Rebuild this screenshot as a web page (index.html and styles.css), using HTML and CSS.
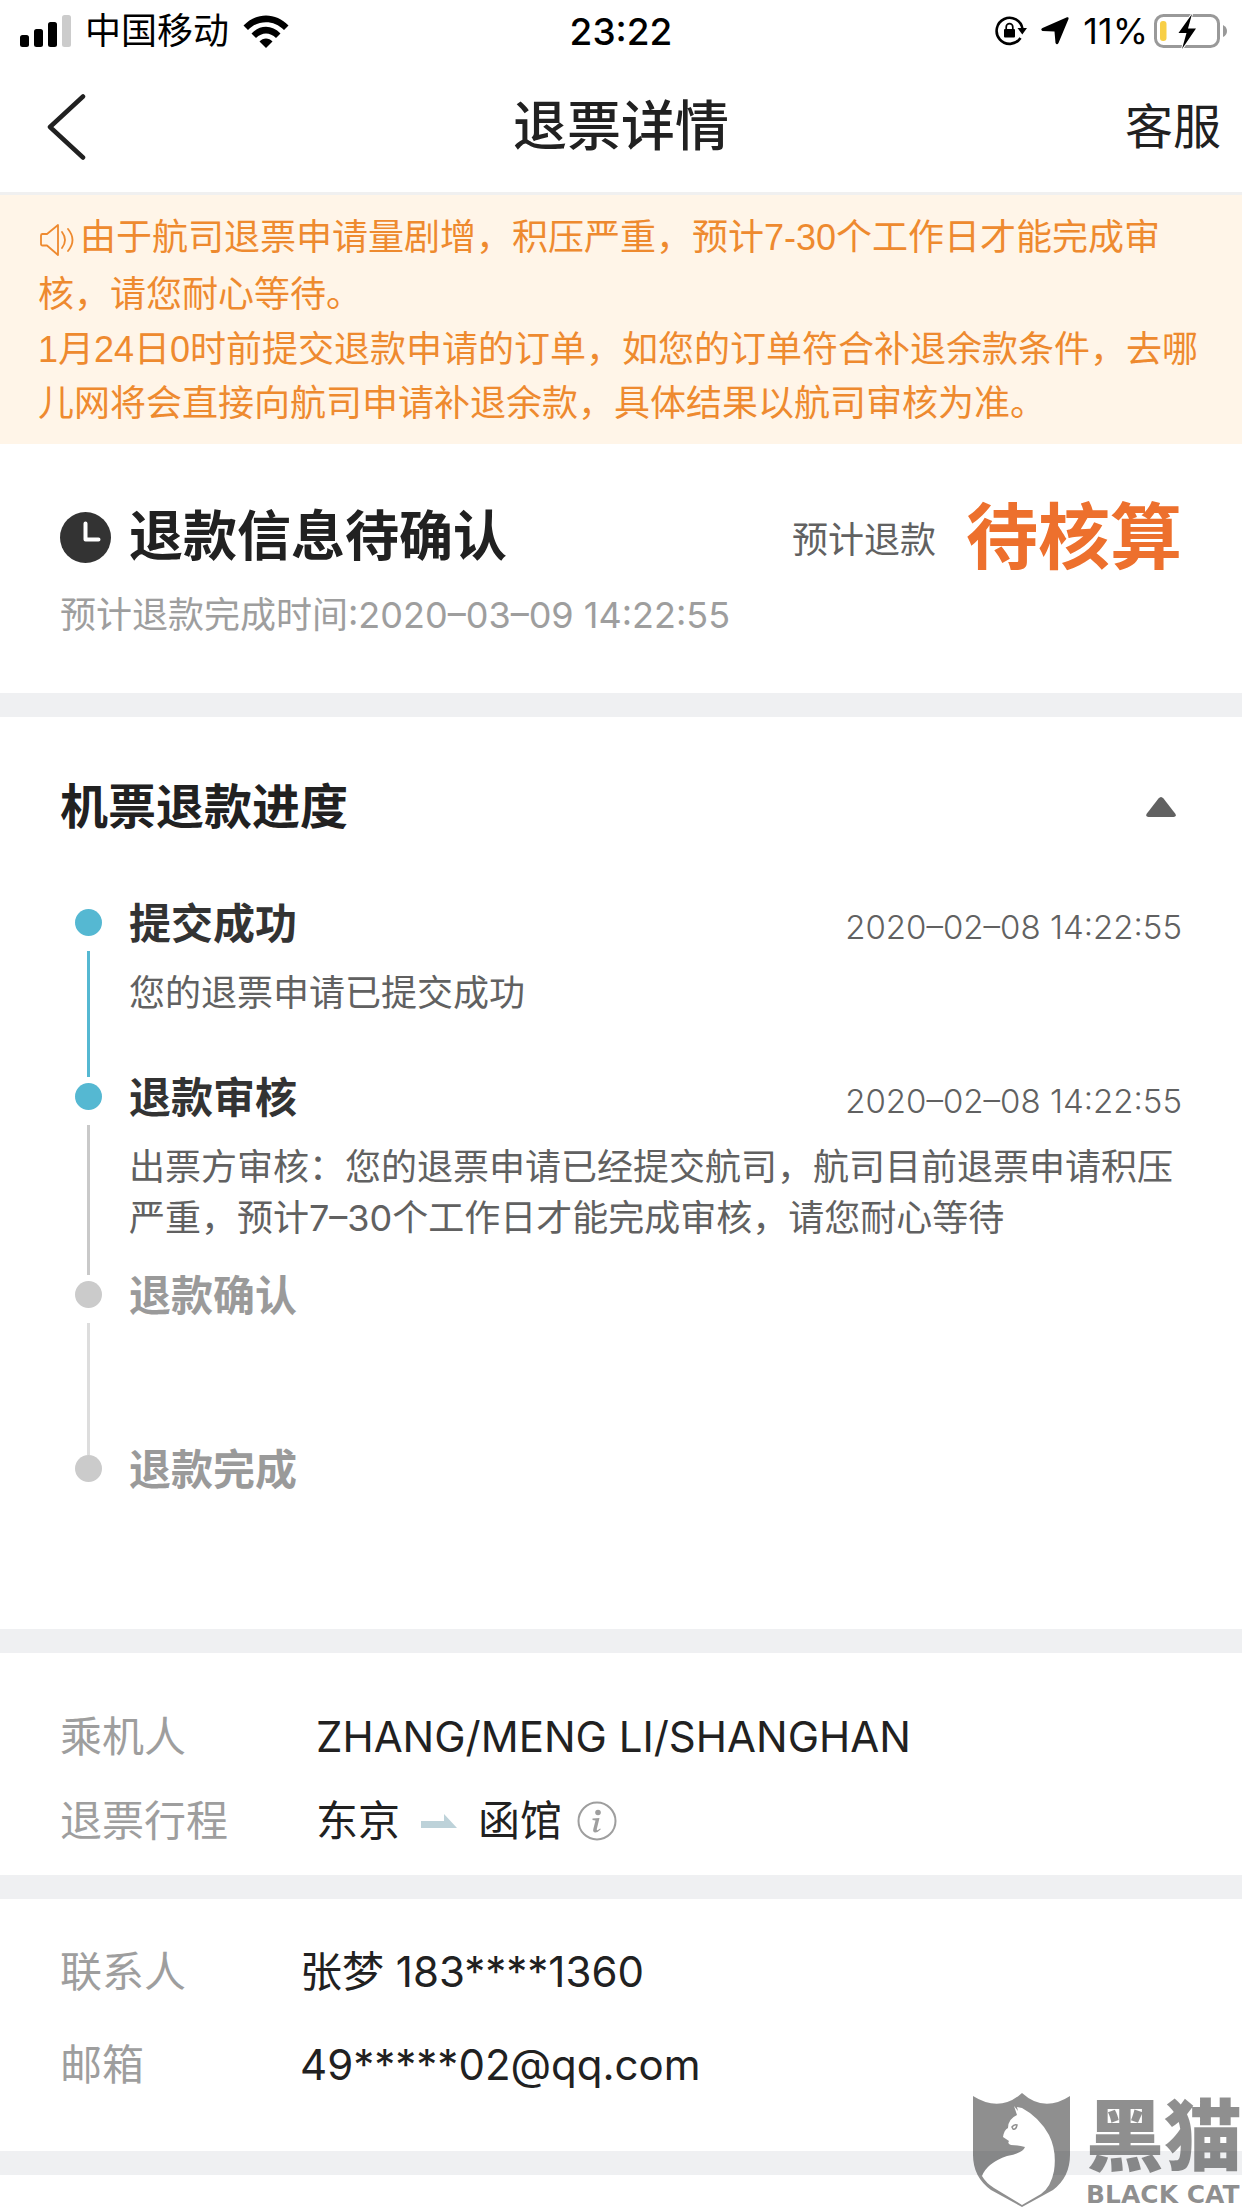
FILE: index.html
```html
<!DOCTYPE html>
<html lang="zh-CN">
<head>
<meta charset="utf-8">
<meta name="viewport" content="width=device-width">
<title>退票详情</title>
<link rel="stylesheet" href="styles.css">
</head>
<body>
<div class="status">
  <div class="status-left">
    <svg class="signal" width="51" height="32" viewBox="0 0 51 32" aria-hidden="true">
      <rect x="0" y="20" width="9" height="12" rx="2.5"/><rect x="14" y="14" width="9" height="18" rx="2.5"/><rect x="28" y="7" width="9" height="25" rx="2.5"/><rect x="42" y="0" width="9" height="32" rx="2.5" fill="#ccc"/>
    </svg>
    <span class="carrier">中国移动</span>
    <svg width="46" height="33" viewBox="0 0 46 33" aria-hidden="true">
      <path d="M0.5 10.5C13-3 33-3 45.500 10.500L41 15C31 4.500 15 4.500 5 15Z"/><path d="M8.500 18.500C17 9.500 29 9.500 37.500 18.500L33 23C27 17 19 17 13 23Z"/><path d="M16.500 26.500C20 22.500 26 22.500 29.500 26.500L23 33Z"/>
    </svg>
  </div>
  <time class="clock">23:22</time>
  <div class="status-right">
    <svg width="32" height="30" viewBox="0 0 32 30" aria-hidden="true">
      <path d="M25.500 22A13 13 0 1 1 27.500 13" fill="none" stroke="#000" stroke-width="2.600"/><path d="M22.500 12h9.500l-4.700 6.500z"/>
      <rect x="9" y="13" width="11" height="8.500" rx="1"/><path d="M11.200 14v-3a3.300 3.300 0 0 1 6.600 0v3" fill="none" stroke="#000" stroke-width="1.700"/>
    </svg>
    <svg class="location" width="28" height="28" viewBox="0 0 28 28" aria-hidden="true"><path d="M26 .3Q28-.3 27.500 2L17.500 26Q16 28.500 14.500 26L13.500 14.500 1.500 14Q-1 12.500 1.500 11Z"/></svg>
    <span class="percent">11%</span>
    <svg width="74" height="36" viewBox="0 0 74 36" aria-hidden="true">
      <rect x="1.500" y="2.500" width="63" height="31" rx="8" fill="none" stroke="#999" stroke-width="3"/><path d="M69 12q4 2 4 6t-4 6z" fill="#999"/>
      <rect x="6" y="8" width="6.500" height="20" rx="3" fill="#f8cf46"/>
      <path d="M38 1 24.500 20h8L28 36 42 15.500h-8Z" stroke="#fff" stroke-width="2" paint-order="stroke"/>
    </svg>
  </div>
</div>
<header class="nav">
  <button class="back" aria-label="返回"><svg width="39" height="66" viewBox="0 0 39 66"><path d="M36 2.500 3 33 36 63.500" fill="none" stroke="#212121" stroke-width="4.500" stroke-linecap="round" stroke-linejoin="round"/></svg></button>
  <h1>退票详情</h1>
  <a class="service" href="#service">客服</a>
</header>
<section class="notice">
  <p class="delay"><svg class="speaker" width="36" height="32" viewBox="0 0 36 32" fill="none" stroke="#ee8a2f" stroke-width="1.800" stroke-linejoin="round" stroke-linecap="round" aria-hidden="true"><path d="M1 11.500q0-1.500 1.500-1.500H7L18 1v30L7 21.500H2.500Q1 21.500 1 20zM22 8q6 8 0 16M28 5q9 11 0 22"/></svg>由于航司退票申请量剧增，积压严重，预计7-30个工作日才能完成审核，请您耐心等待。</p>
  <p>1月24日0时前提交退款申请的订单，如您的订单符合补退余款条件，去哪儿网将会直接向航司申请补退余款，具体结果以航司审核为准。</p>
</section>
<main>
  <section class="summary">
    <div class="summary-row">
      <svg width="51" height="51" viewBox="0 0 51 51" aria-hidden="true"><circle cx="25.500" cy="25.500" r="25.500" fill="#333"/><path d="M25.500 11.500v16h13" fill="none" stroke="#fff" stroke-width="4" stroke-linecap="round" stroke-linejoin="round"/></svg>
      <h2 class="state">退款信息待确认</h2>
      <span class="estimate">预计退款</span>
      <strong class="amount">待核算</strong>
    </div>
    <p class="eta">预计退款完成时间:2020–03–09 14:22:55</p>
  </section>
  <section class="progress">
    <div class="progress-head">
      <h2>机票退款进度</h2>
      <button class="fold" aria-label="收起"><svg width="30" height="20" viewBox="0 0 30 20"><path d="M12.500 1.500q2.500-3 5 0L29.500 17q1 3-2 3h-25q-3 0-2-3z" fill="#616161"/></svg></button>
    </div>
    <ol class="steps">
      <li class="step done">
        <div class="rail"><i class="dot"></i><i class="line"></i></div>
        <div class="body"><div class="step-head"><h3>提交成功</h3><time>2020–02–08 14:22:55</time></div><p>您的退票申请已提交成功</p></div>
      </li>
      <li class="step current">
        <div class="rail"><i class="dot"></i><i class="line"></i></div>
        <div class="body"><div class="step-head"><h3>退款审核</h3><time>2020–02–08 14:22:55</time></div><p>出票方审核：您的退票申请已经提交航司，航司目前退票申请积压严重，预计7–30个工作日才能完成审核，请您耐心等待</p></div>
      </li>
      <li class="step todo">
        <div class="rail"><i class="dot"></i><i class="line"></i></div>
        <div class="body"><div class="step-head"><h3>退款确认</h3></div></div>
      </li>
      <li class="step todo">
        <div class="rail"><i class="dot"></i></div>
        <div class="body"><div class="step-head"><h3>退款完成</h3></div></div>
      </li>
    </ol>
  </section>
  <dl class="info trip">
    <dt>乘机人</dt><dd>ZHANG/MENG LI/SHANGHAN</dd>
    <dt>退票行程</dt>
    <dd class="route"><span>东京</span>
      <svg class="arrow" width="36" height="14" viewBox="0 0 36 14" aria-hidden="true"><path d="M0 7h23V0l13 14H0z" fill="#bdd2d9"/></svg>
      <span>函馆</span>
      <button class="tip" aria-label="行程说明"><svg width="40" height="40" viewBox="0 0 40 40"><circle cx="20" cy="20" r="18.500" fill="none" stroke="#9e9e9e" stroke-width="2"/><circle cx="21" cy="11.500" r="2.800" fill="#9e9e9e"/><path d="M15.500 17.500 22.500 17 19.800 28q-.3 1.800 1.200 1l2.200-1.600.6.900q-3 3.200-5.500 3.200-2.800-.2-2-3.500l2.200-8.500-3-.6z" fill="#9e9e9e"/></svg></button>
    </dd>
  </dl>
  <dl class="info contact">
    <dt>联系人</dt><dd>张梦 183****1360</dd>
    <dt>邮箱</dt><dd>49*****02@qq.com</dd>
  </dl>
</main>
<aside class="watermark">
  <svg width="98" height="115" viewBox="0 0 98 115" aria-hidden="true">
    <path d="M0 3Q27 20 49 0 71 20 97 3V62Q97 84 80 97L49 114 18 97Q0 84 0 62Z" fill="#000" fill-opacity=".44"/>
    <path d="M44 14 49 15Q66 24 76 42 84 58 81 78 78 94 68 101L49 112 21 95Q13 90 9 83 14 70 34 63 50 60 52 54 46 52 38 52 34 51 36 48L30 44Q31 37 35 35 35 26 44 22L41 13 45 18Z" fill="#fff"/>
    <path d="M39 34q2-3 5-2-1 5-4 4z" fill="none" stroke="#8f8f8f" stroke-width="1.500"/>
  </svg>
  <div class="brand"><span class="brand-cn">黑猫</span><span class="brand-en">BLACK CAT</span></div>
</aside>
</body>
</html>
```
FILE: styles.css
```css
* { box-sizing: border-box; }
body {
  margin: 0;
  position: relative;
  min-height: 100vh;
  background: #fff;
  color: #212121;
  font-family: Inter, "Noto Sans CJK SC", sans-serif;
  font-size: 36px;
}
h1, h2, h3, p, ol, dl, dd { margin: 0; padding: 0; font-weight: 400; }
button { padding: 0; border: 0; background: none; display: flex; }
svg { display: block; flex: none; }

.status {
  display: grid;
  grid-template-columns: 1fr auto 1fr;
  align-items: center;
  height: 62px;
  padding: 0 14px;
  color: #000;
}
.status-left, .status-right { display: flex; align-items: center; gap: 14px; }
.status-left { padding-left: 6px; }
.status-right { justify-content: flex-end; gap: 6px; }
.status-right .location { margin: 0 8px; }
.carrier { line-height: 48px; }
.clock { font-size: 37px; font-weight: 500; }

.nav {
  display: grid;
  grid-template-columns: 1fr auto 1fr;
  align-items: center;
  height: 133px;
  padding: 0 21px;
  border-bottom: 3px solid #f0f0f0;
}
.back { margin-left: 26px; }
.nav h1 { font-size: 54px; line-height: 72px; font-weight: 500; }
.service { justify-self: end; font-size: 48px; line-height: 72px; color: #212121; text-decoration: none; }

.notice {
  padding: 14px 36px 13px 38px;
  background: #fff5e8;
  color: #ee8a2f;
  line-height: 54px;
  font-family: "Liberation Sans", "Noto Sans CJK SC", sans-serif;
}
.delay { line-height: 57px; }
.speaker { display: inline-block; margin: 0 4px 0 2px; vertical-align: -6px; }

.summary, .progress, .info { border-bottom: 24px solid #eff0f2; }

.summary { padding: 51px 60px 51px; }
.summary-row { display: flex; align-items: center; height: 84px; }
.state { flex: 1; margin-left: 18px; font-size: 54px; line-height: 72px; font-weight: 700; }
.estimate { color: #616161; }
.amount { margin-left: 30px; font-size: 72px; line-height: 84px; font-weight: 700; color: #ed702d; }
.eta { margin-top: 9px; line-height: 54px; color: #9e9e9e; }

.progress { padding: 54px 60px 15px; }
.progress-head { display: flex; justify-content: space-between; align-items: center; padding-right: 6px; }
.progress-head h2 { font-size: 48px; line-height: 72px; font-weight: 700; }
.steps { margin-top: 51px; list-style: none; }
.step { display: flex; gap: 27px; min-height: 174px; padding-left: 15px; }
.rail { flex: none; width: 27px; padding-top: 15px; display: flex; flex-direction: column; align-items: center; }
.dot { flex: none; width: 27px; height: 27px; border-radius: 50%; background: #cbcbcb; }
.line { flex: 1; width: 3px; margin: 15px 0 -9px; background: #c9c9c9; }
.body { flex: 1; padding-bottom: 22px; }
.step-head { display: flex; justify-content: space-between; align-items: baseline; height: 60px; line-height: 60px; }
.step h3 { font-size: 42px; font-weight: 700; color: #333; }
.step time { font-size: 33px; font-weight: 300; color: #616161; }
.step p { margin-top: 14px; line-height: 51px; color: #616161; }
.done .dot, .done .line, .current .dot { background: #55b8d2; }
.step.todo h3 { color: #9a9a9a; }
.todo .line { margin-bottom: -15px; background: #ddd; }

.info { display: grid; font-size: 42px; }
.info dt { color: #9e9e9e; }
.trip { grid-template-columns: 256px 1fr; line-height: 84px; padding: 42px 60px 12px; }
.contact { grid-template-columns: 240px 1fr; line-height: 93px; padding: 26px 60px 40px; }
.route { display: flex; align-items: center; }
.arrow { margin: 0 21px; }
.tip { margin-left: 15px; }

.watermark { position: absolute; right: 0; bottom: 0; display: flex; gap: 15px; color: rgba(0, 0, 0, .44); }
.brand { display: flex; flex-direction: column; }
.brand-cn { font-size: 78px; line-height: 88px; font-weight: 900; }
.brand-en { font: bold 25px/27px "DejaVu Sans", sans-serif; }
```
